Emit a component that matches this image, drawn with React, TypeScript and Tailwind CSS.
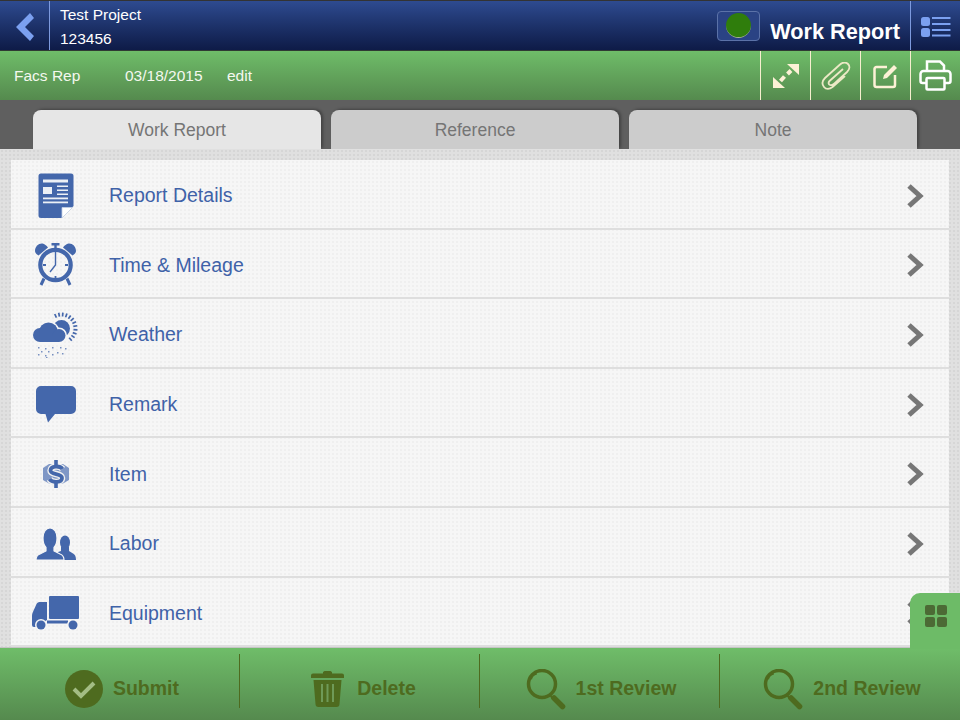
import React from 'react';

const BLUE = '#4467ab';
const CREAM = '#fdf1d6';
const OLIVE = '#4e6b1f';

const ReportIcon = () => (
  <svg width="36" height="46" viewBox="0 0 36 46">
    <path d="M3 .5H33A2.500 2.500 0 0 1 35.500 3V33L23.500 45H3A2.500 2.500 0 0 1 .5 42.500V3A2.500 2.500 0 0 1 3 .5Z" fill={BLUE} />
    <path d="M34.500 34.500H24V45Z" fill="#fff" stroke="#c3cfe4" strokeWidth="0.800" />
    <g fill="#fff" opacity="0.9">
      <rect x="5" y="6.500" width="25" height="3" />
      <rect x="5" y="14" width="9" height="7" />
      <rect x="19" y="12.500" width="11" height="1.500" />
      <rect x="19" y="16.500" width="11" height="1.500" />
      <rect x="19" y="20.500" width="11" height="1.500" />
      <rect x="5" y="24.500" width="25" height="1.800" />
      <rect x="5" y="28.500" width="25" height="1.800" />
    </g>
  </svg>
);

const ClockIcon = () => (
  <svg width="41" height="44" viewBox="0 0 41 44">
    <circle cx="20.500" cy="22" r="15.200" fill="none" stroke={BLUE} strokeWidth="4.200" />
    <path d="M0 8C0 3 4 0 7.500 .5 9.500 1 11.500 2.500 13 4.500L3.500 12.500C1.500 11 0 10 0 8Z" fill={BLUE} />
    <path d="M41 8C41 3 37 0 33.500 .5 31.500 1 29.500 2.500 28 4.500L37.500 12.500C39.500 11 41 10 41 8Z" fill={BLUE} />
    <rect x="16.500" y="0" width="8" height="2.500" fill={BLUE} />
    <rect x="19.300" y="1" width="2.400" height="6" fill={BLUE} />
    <path d="M20.500 9V22L15 29" fill="none" stroke={BLUE} strokeWidth="1.400" />
    <path d="M20.500 33V36M8 22H11M30 22H33" stroke={BLUE} strokeWidth="1.800" />
    <path d="M9 35.500 6 42M32 35.500 35 42" stroke={BLUE} strokeWidth="3" />
  </svg>
);

const rays = [-115, -100, -85, -70, -55, -40, -25, -10, 5, 20, 35, 50];
const snow = [
  [5, 35], [12, 36], [19, 35], [27, 35], [32, 36], [8, 39], [15, 39], [24, 40],
  [29, 41], [5, 42], [12, 43], [19, 42], [13, 45],
];
const cloudShapes = (
  <>
    <circle cx="7" cy="23" r="7" />
    <circle cx="15.500" cy="20" r="9.500" />
    <circle cx="26" cy="23.500" r="6.500" />
    <rect x="7" y="24" width="19" height="6" />
  </>
);

const WeatherIcon = () => (
  <svg width="46" height="46" viewBox="0 0 46 46">
    <circle cx="28.500" cy="16.500" r="8.500" fill={BLUE} />
    {rays.map((a) => {
      const r = (a * Math.PI) / 180;
      return (
        <line
          key={a}
          x1={28.5 + 12 * Math.cos(r)}
          y1={16.5 + 12 * Math.sin(r)}
          x2={28.5 + 16 * Math.cos(r)}
          y2={16.5 + 16 * Math.sin(r)}
          stroke={BLUE}
          strokeWidth="1.700"
        />
      );
    })}
    <g fill="#f6f6f6" stroke="#f6f6f6" strokeWidth="3">{cloudShapes}</g>
    <g fill={BLUE}>{cloudShapes}</g>
    <g fill={BLUE} opacity="0.7">
      {snow.map(([x, y]) => (
        <rect key={`${x}-${y}`} x={x} y={y} width="1.500" height="1.500" />
      ))}
    </g>
  </svg>
);

const RemarkIcon = () => (
  <svg width="40" height="37" viewBox="0 0 40 37">
    <path d="M5 0H35A5 5 0 0 1 40 5V23A5 5 0 0 1 35 28H19L12 36.500 9.500 28H5A5 5 0 0 1 0 23V5A5 5 0 0 1 5 0Z" fill={BLUE} />
  </svg>
);

const ItemIcon = () => (
  <svg width="28" height="30" viewBox="0 0 28 30" fill="none">
    <path d="M1 9 7 5H21L27 9V21L21 24.500H7L1 21Z" fill="#7f97c6" />
    <path d="M20.500 10C18 6.500 8.500 6.500 8.500 11.500 8.500 16.500 20 13.500 20 19 20 24 10 24 7.500 20" stroke="#f0f0f0" strokeWidth="6.500" />
    <path d="M20.500 10C18 6.500 8.500 6.500 8.500 11.500 8.500 16.500 20 13.500 20 19 20 24 10 24 7.500 20" stroke={BLUE} strokeWidth="3.800" />
    <path d="M14 1V6M14 24V29" stroke={BLUE} strokeWidth="3.600" />
  </svg>
);

const LaborIcon = () => (
  <svg width="40" height="32" viewBox="0 0 40 32">
    <ellipse cx="29" cy="14.500" rx="5" ry="7" fill={BLUE} />
    <path d="M25 19H33V23L37 25.500C39 26.500 40 28.500 40 32H22V24L25 23Z" fill={BLUE} />
    <path
      d="M0 32C0 29 1 27 4 26L10 23V19.500C8 17.500 7 14 7 10 7 4 10 0 14 0S21 4 21 10C21 14 20 17.500 18 19.500V23L24 26C27 27 28 29 28 32Z"
      fill={BLUE}
      stroke="#f6f6f6"
      strokeWidth="1.200"
    />
  </svg>
);

const TruckIcon = () => (
  <svg width="47" height="34" viewBox="0 0 47 34">
    <rect x="17" y="0" width="30" height="23" rx="1" fill={BLUE} />
    <path d="M15 6H7.500C6 6 5 7 4.500 8L.5 17C.1 18 0 19 0 20V29A2 2 0 0 0 2 31H4.500L15 24Z" fill={BLUE} />
    <rect x="15" y="24.500" width="21" height="3" fill={BLUE} />
    <circle cx="9" cy="29" r="6" fill="#f6f6f6" />
    <circle cx="41" cy="29" r="6" fill="#f6f6f6" />
    <circle cx="9" cy="29" r="4.500" fill={BLUE} />
    <circle cx="41" cy="29" r="4.500" fill={BLUE} />
  </svg>
);

const SearchIcon = () => (
  <svg width="40" height="41" viewBox="0 0 40 41">
    <circle cx="16" cy="15" r="13.500" fill="none" stroke={OLIVE} strokeWidth="3.500" />
    <path d="M4 10C5 6 7 4 10 3L11 5.500C8 6 6.500 8 6 10.500Z" fill={OLIVE} />
    <path d="M24 26 27 30" stroke={OLIVE} strokeWidth="2" />
    <path d="M28 29 36.500 37.500" stroke={OLIVE} strokeWidth="5.500" strokeLinecap="round" />
  </svg>
);

const rows = [
  { label: 'Report Details', icon: <ReportIcon /> },
  { label: 'Time & Mileage', icon: <ClockIcon /> },
  { label: 'Weather', icon: <WeatherIcon /> },
  { label: 'Remark', icon: <RemarkIcon /> },
  { label: 'Item', icon: <ItemIcon /> },
  { label: 'Labor', icon: <LaborIcon /> },
  { label: 'Equipment', icon: <TruckIcon /> },
];

const tabs = [
  { label: 'Work Report', active: true },
  { label: 'Reference', active: false },
  { label: 'Note', active: false },
];

const App: React.FC = () => {
  return (
    <div className="relative w-[960px] h-[720px] overflow-hidden flex flex-col font-['Liberation_Sans',sans-serif]">
      {/* top bar */}
      <header className="h-[51px] shrink-0 flex border-t border-b border-t-[#333] border-b-[#2f3a33] bg-gradient-to-b from-[#2e4b90] to-[#0e1b47]">
        <div className="w-[50px] pt-[3px] flex items-center justify-center border-r border-[#7d9ade]">
          <svg width="18" height="28" viewBox="0 0 18 28">
            <path d="M14 0 18 5 9 14 18 23 14 28 0 14Z" fill="#7ba0f0" />
          </svg>
        </div>
        <div className="pl-[10px] text-white text-[15.500px] leading-[24px] pt-[2px]">
          <div>Test Project</div>
          <div>123456</div>
        </div>
        <div className="ml-auto flex items-center pr-[10px]">
          <div className="w-[43px] h-[30px] rounded-[4px] border border-[#5b72a8] bg-[#2a4384] flex items-center justify-center">
            <div className="w-[25px] h-[25px] rounded-full bg-[#2f7d0c] border-b border-[#a6b58f]" />
          </div>
          <div className="ml-[10px] mt-[13px] text-white text-[21.700px] font-bold leading-none">Work Report</div>
        </div>
        <div className="w-[50px] pt-[4px] flex items-center justify-center border-l border-[#7d9ade]">
          <svg width="30" height="21" viewBox="0 0 30 21">
            <rect x="0" y="0" width="9" height="9" rx="2.500" fill="#7ba0f0" />
            <rect x="0" y="11" width="9" height="9" rx="2.500" fill="#7ba0f0" />
            <path d="M11 1H29.500M11 7H29.500M11 13H29.500M11 18.500H29.500" stroke="#7ba0f0" strokeWidth="1.800" />
          </svg>
        </div>
      </header>

      {/* green sub bar */}
      <div className="h-[49px] shrink-0 flex items-center bg-gradient-to-b from-[#6fbd69] to-[#558a4e] text-[#f4f8ef] text-[15.500px]">
        <span className="ml-[14px] w-[111px] pt-[1px]">Facs Rep</span>
        <span className="w-[102px] pt-[1px]">03/18/2015</span>
        <span className="pt-[1px]">edit</span>
        <div className="ml-auto flex h-full">
          <div className="w-[50px] flex items-center justify-center border-l border-[#f7efcf]">
            <svg width="26" height="24" viewBox="0 0 26 24">
              <path d="M14 0H26V11Z" fill={CREAM} />
              <path d="M0 24V13L12 24Z" fill={CREAM} />
              <path d="M18 6.500 14.500 10M11.500 12.500 7.500 17" stroke={CREAM} strokeWidth="4" />
            </svg>
          </div>
          <div className="w-[50px] flex items-center justify-center border-l border-[#f7efcf]">
            <svg width="30" height="28" viewBox="0 0 30 28" fill="none">
              <path d="M22 7 8.500 19C7 20.500 7.500 22.500 9 23S12 23 13.500 21.500L26 10C29 7 29 4 27 2S21.500 0 19 2.500L4 16C1 19 1 22.500 3 25S8.500 27.500 11.500 25L24 14" stroke="#ece9c6" strokeWidth="1.800" />
            </svg>
          </div>
          <div className="w-[50px] flex items-center justify-center border-l border-[#f7efcf]">
            <svg width="26" height="26" viewBox="0 0 26 26" fill="none">
              <path d="M14 4H3.500A2 2 0 0 0 1.500 6V22A2 2 0 0 0 3.500 24H20A2 2 0 0 0 22 22V12" stroke={CREAM} strokeWidth="2.500" />
              <path d="M10 16 11 12 21 2 24 5 14 15Z" fill={CREAM} />
            </svg>
          </div>
          <div className="w-[50px] flex items-center justify-center border-l border-[#f7efcf]">
            <svg width="33" height="31" viewBox="0 0 33 31" fill="none" stroke="#ffffff" strokeWidth="2.500">
              <path d="M8 12V1.500H21L25 5.500V12" />
              <path d="M7 23H3.500A2 2 0 0 1 1.500 21V14A3 3 0 0 1 4.500 11H28.500A3 3 0 0 1 31.500 14V21A2 2 0 0 1 29.500 23H26" />
              <rect x="7.500" y="18" width="18" height="11.500" rx="1" />
            </svg>
          </div>
        </div>
      </div>

      {/* tabs */}
      <div className="h-[49px] shrink-0 bg-[#5f5f5f] flex items-end gap-[10px] pl-[33px]">
        {tabs.map((tab) => (
          <div
            key={tab.label}
            className={`w-[288px] h-[39px] pt-[2px] rounded-t-[8px] flex items-center justify-center text-[17.500px] text-[#757575] shadow-[2px_-1px_3px_rgba(0,0,0,0.3)] ${
              tab.active ? 'bg-[#e6e6e6]' : 'bg-[#cccccc]'
            }`}
          >
            {tab.label}
          </div>
        ))}
      </div>

      {/* list */}
      <main className="flex-1 min-h-0 overflow-hidden bg-[#e0e0e0] bg-[image:radial-gradient(#d6d6d6_1px,transparent_1px)] bg-[length:4px_4px] pt-[11px] px-[11px]">
        <div className="bg-[#f6f6f6] bg-[image:radial-gradient(#efefef_1px,transparent_1px)] bg-[length:4px_4px]">
          {rows.map((row) => (
            <div key={row.label} className="h-[69.600px] pt-[4px] flex items-center border-b-2 border-[#dedede] text-[#3f62a8]">
              <div className="w-[90px] pr-[1px] flex items-center justify-center">{row.icon}</div>
              <div className="ml-[8px] text-[19.500px]">{row.label}</div>
              <svg className="ml-auto mr-[25px]" width="18" height="26" viewBox="0 0 18 26" fill="none">
                <path d="M3 3 14 13 3 23" stroke="#777" strokeWidth="5" />
              </svg>
            </div>
          ))}
        </div>
      </main>

      {/* bottom toolbar */}
      <footer className="h-[73px] shrink-0 border-t border-[#c5c5c5] bg-gradient-to-b from-[#6fbd69] to-[#558a4e] grid grid-cols-4 items-start pt-[6px] text-[#4e6b1f] text-[19.500px] font-bold">
        <div className="h-[54px] pt-[16px] pl-[5px] flex items-center justify-center gap-[10px] border-r border-[#4e6b1f]">
          <svg width="38" height="38" viewBox="0 0 38 38">
            <circle cx="19" cy="19" r="19" fill={OLIVE} />
            <path d="M9 19 16 26 29 13" fill="none" stroke="#a3bd84" strokeWidth="4" />
          </svg>
          <span>Submit</span>
        </div>
        <div className="h-[54px] pt-[16px] pl-[8px] flex items-center justify-center gap-[13px] border-r border-[#4e6b1f]">
          <svg width="33" height="36" viewBox="0 0 33 36" fill={OLIVE}>
            <path d="M12 2.500A2 2 0 0 1 14 0H19A2 2 0 0 1 21 2.500H31A2 2 0 0 1 33 4.500V7H0V4.500A2 2 0 0 1 2 2.500Z" />
            <path d="M2.500 9H30.500L28.500 33A3 3 0 0 1 25.500 36H7.500A3 3 0 0 1 4.500 33Z" />
            <path d="M11 13V31M16.500 13V31M22 13V31" stroke="#6f9a58" strokeWidth="2" />
          </svg>
          <span>Delete</span>
        </div>
        <div className="h-[54px] pt-[16px] pl-[3px] flex items-center justify-center gap-[10px] border-r border-[#4e6b1f]">
          <SearchIcon />
          <span>1st Review</span>
        </div>
        <div className="h-[54px] pt-[16px] pl-[4px] flex items-center justify-center gap-[10px]">
          <SearchIcon />
          <span>2nd Review</span>
        </div>
      </footer>

      {/* floating grid toggle */}
      <div className="absolute left-[910px] top-[593px] w-[50px] h-[56px] rounded-tl-[10px] bg-[#6dbb67] pt-[12px] pl-[15px]">
        <div className="grid grid-cols-2 gap-[1.500px] w-[22px]">
          <div className="h-[10px] rounded-[2px] bg-[#4c6a35]" />
          <div className="h-[10px] rounded-[2px] bg-[#4c6a35]" />
          <div className="h-[10px] rounded-[2px] bg-[#4c6a35]" />
          <div className="h-[10px] rounded-[2px] bg-[#4c6a35]" />
        </div>
      </div>
    </div>
  );
};

export default App;
